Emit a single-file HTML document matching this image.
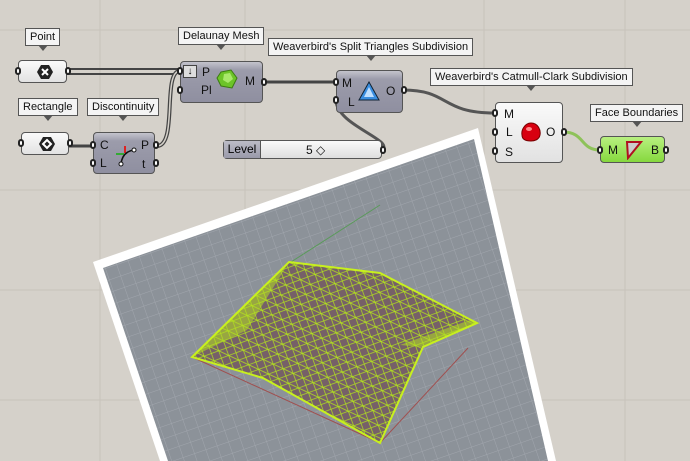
<!DOCTYPE html>
<html><head><style>
body{margin:0;width:690px;height:461px;overflow:hidden;background:#d5d1ca;font-family:"Liberation Sans",sans-serif;position:relative}
.lbl{position:absolute;background:#f4f4f4;border:1px solid #555;font-size:11px;line-height:16px;padding:0 4px;color:#111;white-space:nowrap}
.lbl:after{content:"";position:absolute;left:50%;bottom:-6px;margin-left:-5px;border-left:5px solid transparent;border-right:5px solid transparent;border-top:6px solid #555}
.c{position:absolute;border:1px solid #555;border-radius:4px;box-sizing:border-box}
.dk{background:linear-gradient(#c4c4cc,#9c9cab 20%,#8f8fa0)}
.lt{background:linear-gradient(#fafafa,#e2e2e2)}
.t{position:absolute;font-size:12px;color:#111}
.p{position:absolute;width:6px;height:8px;border:2px solid #222;border-radius:5px;background:#fff;box-sizing:border-box}
</style></head><body>
<svg width="690" height="461" style="position:absolute;left:0;top:0">
<g stroke="#c8c3bb" stroke-width="1">
<line x1="100" y1="0" x2="100" y2="461"/><line x1="245" y1="0" x2="245" y2="461"/><line x1="484" y1="0" x2="484" y2="461"/><line x1="625" y1="0" x2="625" y2="461"/>
<line x1="0" y1="30" x2="690" y2="30"/><line x1="0" y1="190" x2="690" y2="190"/><line x1="0" y1="290" x2="690" y2="290"/><line x1="0" y1="400" x2="690" y2="400"/>
</g>
<g fill="none" stroke="#444" stroke-width="2">
<path d="M67 69 H180"/><path d="M67 74 H176"/>
<path d="M157 146 C178 146 162 71 180 71" stroke-width="4"/>
<path d="M157 146 C178 146 162 71 180 71" stroke="#d5d1ca" stroke-width="1.5"/>
<path d="M69 146 H92" stroke-width="3"/>
<path d="M263 82 H336" stroke-width="3"/>
<path d="M403 90 C450 90 440 113 495 113" stroke-width="3" stroke="#555"/>
<path d="M382 150 C395 140 336 125 336 100" stroke-width="3" stroke="#555"/>
<path d="M563 132 C585 132 580 150 600 150" stroke-width="3" stroke="#8ec25a"/>
</g>
<defs>
<clipPath id="inn"><polygon points="103,268 474,139 548,461 168,461"/></clipPath>
<clipPath id="msh"><polygon points="289,262 380,273 477,323 423,347 380,443 263,378 192,357"/></clipPath>
<pattern id="g" width="12" height="12" patternUnits="userSpaceOnUse" patternTransform="rotate(-19)"><rect width="12" height="12" fill="#8c9299"/><path d="M0 0H12M0 0V12" stroke="#a1a6ad" stroke-width="1"/></pattern>
<pattern id="m" width="11" height="11" patternUnits="userSpaceOnUse" patternTransform="rotate(25)"><rect width="11" height="11" fill="#766068"/><path d="M0 0L11 11M11 0L0 11M0 5.5H11" stroke="#b4e41c" stroke-width="0.7"/></pattern>
</defs>
<polygon points="93,262 478,128 556,461 160,461" fill="#fff"/>
<g clip-path="url(#inn)"><rect width="690" height="461" fill="url(#g)"/>
<line x1="380" y1="205" x2="291" y2="262" stroke="#5a9a5a"/>
<polyline points="192,357 380,443 468,348" fill="none" stroke="#a05050"/>
</g>
<g clip-path="url(#msh)"><rect width="690" height="461" fill="url(#m)"/>
<polygon points="289,262 247,330 192,357 200,330" fill="#b5e020" opacity="0.55"/>
<polygon points="477,323 423,347 400,345 470,320" fill="#b5e020" opacity="0.55"/></g>
<polygon points="289,262 380,273 477,323 423,347 380,443 263,378 192,357" fill="none" stroke="#c8f01e" stroke-width="2"/>
</svg>

<div class="lbl" style="left:25px;top:28px">Point</div>
<div class="c lt" style="left:18px;top:60px;width:49px;height:23px"><svg width="49" height="23" style="position:absolute;left:0;top:0"><polygon points="18,11 22,4 30,4 34,11 30,18 22,18" fill="#222"/><path d="M23 8l6 6M29 8l-6 6" stroke="#fff" stroke-width="2"/></svg></div>
<div class="p" style="left:15px;top:67px"></div><div class="p" style="left:65px;top:67px"></div>

<div class="lbl" style="left:178px;top:27px">Delaunay Mesh</div>
<div class="c dk" style="left:180px;top:61px;width:83px;height:42px">
<div style="position:absolute;left:2px;top:3px;width:12px;height:11px;border:1px solid #444;background:#ddd;font-size:10px;line-height:11px;text-align:center">↓</div>
<span class="t" style="left:21px;top:3px">P</span><span class="t" style="left:20px;top:21px">Pl</span><span class="t" style="left:64px;top:12px">M</span>
<svg width="22" height="20" style="position:absolute;left:35px;top:7px"><polygon points="5,3 15,1 21,9 16,19 5,17 1,9" fill="#6cc428" stroke="#3b7a12"/><polygon points="8,5 14,4 17,10 12,14 7,11" fill="#a8e86a"/></svg></div>
<div class="p" style="left:177px;top:67px"></div><div class="p" style="left:177px;top:86px"></div><div class="p" style="left:261px;top:78px"></div>

<div class="lbl" style="left:268px;top:38px">Weaverbird's Split Triangles Subdivision</div>
<div class="c dk" style="left:336px;top:70px;width:67px;height:43px">
<span class="t" style="left:5px;top:5px">M</span><span class="t" style="left:11px;top:24px">L</span><span class="t" style="left:49px;top:13px">O</span>
<svg width="22" height="20" style="position:absolute;left:21px;top:10px"><polygon points="11,1 21,19 1,19" fill="#3a8ee0" stroke="#123"/><polygon points="11,6 16,16 6,16" fill="#bfe0ff"/></svg></div>
<div class="p" style="left:333px;top:78px"></div><div class="p" style="left:333px;top:96px"></div><div class="p" style="left:401px;top:86px"></div>

<div class="lbl" style="left:430px;top:68px">Weaverbird's Catmull-Clark Subdivision</div>
<div class="c lt" style="left:495px;top:102px;width:68px;height:61px">
<span class="t" style="left:8px;top:4px">M</span><span class="t" style="left:10px;top:22px">L</span><span class="t" style="left:9px;top:42px">S</span><span class="t" style="left:50px;top:22px">O</span>
<svg width="22" height="22" style="position:absolute;left:24px;top:18px"><path d="M11 2C18 2 21 9 20 14C19 19 14 20 11 20C7 20 2 19 2 14C1 9 5 2 11 2Z" fill="#d80010" stroke="#700"/><ellipse cx="9" cy="8" rx="3" ry="2" fill="#ff8a8a"/></svg></div>
<div class="p" style="left:492px;top:109px"></div><div class="p" style="left:492px;top:128px"></div><div class="p" style="left:492px;top:147px"></div><div class="p" style="left:561px;top:128px"></div>

<div class="lbl" style="left:590px;top:104px">Face Boundaries</div>
<div class="c" style="left:600px;top:136px;width:65px;height:27px;background:linear-gradient(#b8f080,#86d83e)">
<span class="t" style="left:7px;top:6px">M</span><span class="t" style="left:50px;top:6px">B</span>
<svg width="20" height="20" style="position:absolute;left:23px;top:3px"><polygon points="3,2 17,2 4,18" fill="#ccc" stroke="#b01020" stroke-width="2"/></svg></div>
<div class="p" style="left:597px;top:146px"></div><div class="p" style="left:663px;top:146px"></div>

<div class="lbl" style="left:18px;top:98px">Rectangle</div>
<div class="c lt" style="left:21px;top:132px;width:48px;height:23px"><svg width="48" height="23" style="position:absolute;left:0;top:0"><polygon points="17,11 21,4 29,4 33,11 29,18 21,18" fill="#222"/><polygon points="25,7 29,11 25,15 21,11" fill="none" stroke="#fff" stroke-width="2"/></svg></div>
<div class="p" style="left:18px;top:139px"></div><div class="p" style="left:67px;top:139px"></div>

<div class="lbl" style="left:87px;top:98px">Discontinuity</div>
<div class="c dk" style="left:93px;top:132px;width:62px;height:42px">
<span class="t" style="left:6px;top:5px">C</span><span class="t" style="left:6px;top:23px">L</span><span class="t" style="left:47px;top:5px">P</span><span class="t" style="left:48px;top:24px">t</span>
<svg width="24" height="24" style="position:absolute;left:20px;top:10px"><path d="M2 11H10" stroke="#3a3" stroke-width="2"/><path d="M11 3V10" stroke="#d22" stroke-width="2"/><path d="M7 21C8 12 13 8 20 7" stroke="#111" fill="none" stroke-width="1.5"/><circle cx="20" cy="7" r="2" fill="#fff" stroke="#111"/><circle cx="7" cy="21" r="2" fill="#fff" stroke="#111"/></svg></div>
<div class="p" style="left:90px;top:141px"></div><div class="p" style="left:90px;top:159px"></div><div class="p" style="left:153px;top:141px"></div><div class="p" style="left:153px;top:159px"></div>

<div class="c" style="left:223px;top:140px;width:159px;height:19px;background:linear-gradient(#fafafa,#dedede)">
<div style="position:absolute;left:0;top:0;width:36px;height:17px;background:linear-gradient(#bcbcc6,#9a9aaa);border-right:1px solid #555;font-size:12px;line-height:17px;text-align:center">Level</div>
<span class="t" style="left:82px;top:2px">5 ◇</span></div>
<div class="p" style="left:380px;top:146px"></div>
</body></html>
